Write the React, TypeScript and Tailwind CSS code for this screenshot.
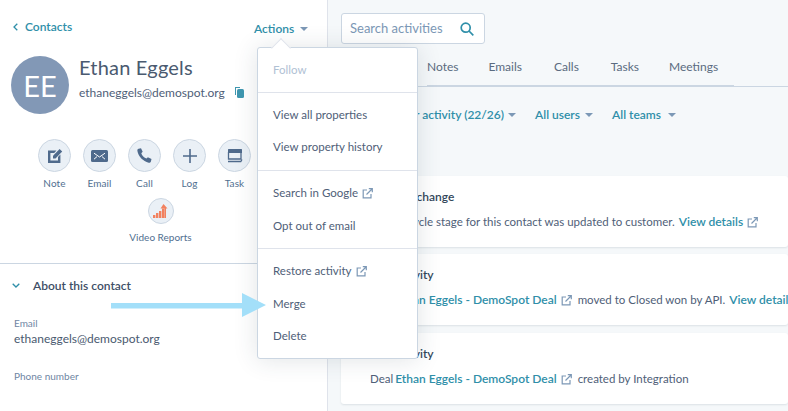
import type { ReactNode } from 'react';

const LINK = 'text-[#2f8fa9]';

/* ── icons ──────────────────────────────────────────── */
function Caret({ className = 'fill-[#7c98b6]' }: { className?: string }) {
  return (
    <svg width="8" height="4" viewBox="0 0 8 4" className={className}>
      <path d="M0 0h8L4 4z" />
    </svg>
  );
}

function External({ className = '' }: { className?: string }) {
  return (
    <svg width="11" height="11" viewBox="0 0 11 11" fill="none" stroke="#7c98b6" strokeWidth="1.2" className={`flex-none ${className}`}>
      <path d="M5 2H1.200v7.800H9V6" />
      <path d="M4.500 6.500 10 1M6.800.7h3.500v3.500" />
    </svg>
  );
}

function NoteIcon() {
  return (
    <svg width="16" height="16" viewBox="0 0 16 16" fill="#4f6a8c">
      <path d="M1 2.500h8.500L7.200 5H3.400v7.600H11V9l2.400-2.500V15H1z" />
      <path d="M6 7.800 12.600.9l2.600 2.500-6.700 7H6z" />
    </svg>
  );
}

function EmailIcon() {
  return (
    <svg width="17" height="12" viewBox="0 0 17 12">
      <rect width="17" height="12" rx="1.500" fill="#4f6a8c" />
      <path d="M3 3.200 8.500 7 14 3.200M3 9.200 6 6.600M14 9.200 11 6.600" fill="none" stroke="#fff" strokeWidth="1" />
    </svg>
  );
}

function PhoneIcon() {
  return (
    <svg width="15" height="15" viewBox="0 0 15 15" fill="#4f6a8c">
      <path d="M1.600.8 4 .2l1.700 3.500L4.300 5.200c.6 2.200 2.900 4.700 5.200 5.400l1.400-1.400 3.600 1.700-.6 2.500c-.3 1-1.200 1.500-2.200 1.300C6 13.300 1.400 8.600.4 3c-.2-1 .2-1.900 1.200-2.200z" />
    </svg>
  );
}

function PlusIcon() {
  return (
    <svg width="14" height="14" viewBox="0 0 14 14" stroke="#4f6a8c" strokeWidth="1.600">
      <path d="M7 0v14M0 7h14" />
    </svg>
  );
}

function TaskIcon() {
  return (
    <svg width="16" height="15" viewBox="0 0 16 15" fill="none">
      <path d="M1.500 1h13c.4 0 .5.200.5.500V5H1V1.500c0-.3.100-.5.500-.5z" fill="#4f6a8c" />
      <path d="M1.500 4v7h12.500V4M1 13.500h12.800l1.200-2" stroke="#4f6a8c" strokeWidth="1.300" />
    </svg>
  );
}

function ReportsIcon() {
  return (
    <svg width="15" height="14" viewBox="0 0 15 14" fill="#f2815f">
      <rect x="0" y="11" width="2.400" height="3" />
      <rect x="3" y="9" width="2.400" height="5" />
      <rect x="6" y="7" width="2.400" height="7" />
      <rect x="9" y="4.500" width="2.400" height="9.500" />
      <path d="M10.500 0 14.500 4.500H13V14h-1.500V4.500H7.500z" />
    </svg>
  );
}

/* ── bits ───────────────────────────────────────────── */
function ActionButton({ icon, label }: { icon: ReactNode; label: string }) {
  return (
    <div className="flex w-[45px] flex-col items-center">
      <div className="flex h-[33px] w-[33px] items-center justify-center rounded-full border border-[#cbd6e2] bg-[#eaf0f6]">
        {icon}
      </div>
      <span className="mt-[3px] text-[10px] leading-[16px] tracking-[0.1px] text-[#516f90]">{label}</span>
    </div>
  );
}

function MenuItem({ children, muted, external, className = '' }: { children: string; muted?: boolean; external?: boolean; className?: string }) {
  return (
    <div className={`flex h-[32px] items-center gap-[4px] pl-[15px] text-[11.5px] ${muted ? 'text-[#b0c1d4]' : 'text-[#4f6078]'} ${className}`}>
      {children}
      {external && <External />}
    </div>
  );
}

function Card({ title, children, className = '' }: { title: string; children: ReactNode; className?: string }) {
  return (
    <div className={`h-[71px] rounded-[3px] bg-white pl-[26px] shadow-[0_1px_2px_rgba(45,62,80,0.12)] ${className}`}>
      <p className="pt-[13px] text-[12px] font-semibold leading-[16px] text-[#33475b]">{title}</p>
      <p className="ml-[3px] mt-[9px] flex items-center whitespace-nowrap text-[11.5px] leading-[16px] text-[#4f6078]">{children}</p>
    </div>
  );
}

function CardLink({ children, className = 'ml-[4px]' }: { children: string; className?: string }) {
  return <span className={`text-[12px] font-semibold ${LINK} ${className}`}>{children}</span>;
}

export default function App() {
  return (
    <div className="relative flex h-[411px] w-[788px] overflow-hidden bg-[#f5f8fa] font-['Lato',sans-serif]">
      {/* Left panel */}
      <aside className="flex w-[328px] flex-none flex-col border-r border-[#dfe3eb] bg-white">
        <div className="flex h-[56px] items-start pl-[13px] pt-[18px]">
          <svg width="5" height="8" viewBox="0 0 5 8" fill="none" stroke="#2f8fa9" strokeWidth="1.300" className="mt-[5px]">
            <path d="M4.300.7 1 4l3.300 3.300" />
          </svg>
          <span className={`ml-[7px] w-[52px] text-[12px] font-semibold leading-[17px] ${LINK}`}>Contacts</span>
          <span className={`ml-[177px] mt-[2px] flex items-center gap-[6px] text-[12px] font-semibold leading-[17px] ${LINK}`}>
            Actions <Caret />
          </span>
        </div>

        <div className="flex pl-[11px]">
          <div className="flex h-[58px] w-[58px] items-center justify-center rounded-full bg-[#8298b6] text-[29px] leading-none text-white">
            EE
          </div>
          <div className="ml-[10px]">
            <h1 className="-mt-[2px] text-[20px] leading-[26px] tracking-[0.2px] text-[#4a5a70]">Ethan Eggels</h1>
            <div className="mt-[4px] flex items-center gap-[10px] text-[12px] leading-[17px] text-[#4f6078]">
              ethaneggels@demospot.org
              <svg width="9" height="11" viewBox="0 0 9 11" fill="#3f97b0">
                <path d="M0 0h5v1H1v7H0z" />
                <rect x="2" y="2" width="7" height="9" rx="1.500" />
              </svg>
            </div>
          </div>
        </div>

        <div className="mt-[25px] flex pl-[32px]">
          <ActionButton icon={<NoteIcon />} label="Note" />
          <ActionButton icon={<EmailIcon />} label="Email" />
          <ActionButton icon={<PhoneIcon />} label="Call" />
          <ActionButton icon={<PlusIcon />} label="Log" />
          <ActionButton icon={<TaskIcon />} label="Task" />
        </div>

        <div className="mt-[7px] flex w-[321px] flex-col items-center">
          <div className="flex h-[26px] w-[26px] items-center justify-center rounded-full border border-[#cbd6e2] bg-[#eaf0f6]">
            <ReportsIcon />
          </div>
          <span className="mt-[5px] text-[10px] leading-[16px] text-[#516f90]">Video Reports</span>
        </div>

        <div className="mt-[18px] flex-1 border-t border-[#cbd6e2]">
          <div className="flex items-center pl-[12px] pt-[13px]">
            <svg width="8" height="5" viewBox="0 0 8 5" fill="none" stroke="#2f8fa9" strokeWidth="1.300">
              <path d="M.7.7 4 4 7.300.7" />
            </svg>
            <span className="ml-[13px] text-[12px] font-semibold leading-[17px] text-[#3e4f66]">About this contact</span>
          </div>
          <p className="ml-[14px] mt-[21px] text-[10px] leading-[16px] text-[#6f86a3]">Email</p>
          <p className="ml-[14px] mt-[-1px] text-[12px] leading-[17px] text-[#4a5a70]">ethaneggels@demospot.org</p>
          <p className="ml-[14px] mt-[21px] text-[10px] leading-[16px] text-[#6f86a3]">Phone number</p>
        </div>
      </aside>

      {/* Right panel */}
      <main className="min-w-0 flex-1">
        <div className="ml-[13px] mt-[13px] flex h-[31px] w-[144px] items-center rounded-[3px] border border-[#cbd6e2] bg-white pl-[8px]">
          <span className="w-[92px] whitespace-nowrap text-[13px] text-[#7c98b6]">Search activities</span>
          <svg width="14" height="14" viewBox="0 0 14 14" fill="none" stroke="#2f8fa9" strokeWidth="1.700" className="ml-[18px]">
            <circle cx="5.700" cy="5.700" r="4.500" />
            <path d="m9 9 4.300 4.300" />
          </svg>
        </div>

        <div className="mt-[14px] flex h-[29px] items-start border-b border-[#cbd6e2] pl-[99px] text-[12px] leading-[17px] text-[#5a6b80]">
          <div className="flex h-[29px] gap-[30px] border-b-[2px] border-[#cbd6e2] pr-[16px]">
            <span>Notes</span>
            <span>Emails</span>
            <span className="ml-[2px]">Calls</span>
            <span className="ml-[2px]">Tasks</span>
            <span>Meetings</span>
          </div>
        </div>

        <div className={`mt-[19px] flex h-[17px] items-center pl-[13px] text-[12px] font-semibold leading-[17px] ${LINK}`}>
          <span className="ml-[20px] w-[143px] whitespace-nowrap text-right">Filter activity (22/26)</span>
          <Caret className="ml-[4px] fill-[#7c98b6]" />
          <span className="ml-[19px]">All users</span>
          <Caret className="ml-[5px] fill-[#7c98b6]" />
          <span className="ml-[19px]">All teams</span>
          <Caret className="ml-[7px] fill-[#7c98b6]" />
        </div>

        <div className="ml-[13px] mt-[53px] flex flex-col gap-[7px]">
          <Card title="Lifecycle change">
            The lifecycle stage for this contact was updated to customer.
            <CardLink>View details</CardLink>
            <External className="ml-[4px]" />
          </Card>
          <Card title="Deal activity">
            Deal <CardLink className="ml-[2px]">Ethan Eggels - DemoSpot Deal</CardLink>
            <External className="ml-[4px] mr-[6px]" />
            moved to Closed won by API.
            <CardLink>View details</CardLink>
          </Card>
          <Card title="Deal activity" className="mt-[1px]">
            Deal <CardLink className="ml-[2px]">Ethan Eggels - DemoSpot Deal</CardLink>
            <External className="ml-[4px] mr-[6px]" />
            created by Integration
          </Card>
        </div>
      </main>

      {/* Actions dropdown */}
      <div className="absolute left-[257px] top-[47px] w-[161px] rounded-[3px] border border-[#cbd6e2] bg-white shadow-[0_1px_24px_rgba(45,62,80,0.14)]">
        <div className="absolute left-[16px] top-[-7px] h-[14px] w-[14px] rotate-45 border-l border-t border-[#dfe3eb] bg-white" />
        <div className="relative border-b border-[#dfe3eb] pb-[6px] pt-[6px]">
          <MenuItem muted>Follow</MenuItem>
        </div>
        <div className="border-b border-[#dfe3eb] pb-[7px] pt-[6px]">
          <MenuItem>View all properties</MenuItem>
          <MenuItem>View property history</MenuItem>
        </div>
        <div className="border-b border-[#dfe3eb] pb-[6px] pt-[6px]">
          <MenuItem external>Search in Google</MenuItem>
          <MenuItem className="mt-[1px]">Opt out of email</MenuItem>
        </div>
        <div className="pb-[6px] pt-[6px]">
          <MenuItem external>Restore activity</MenuItem>
          <MenuItem className="mt-[1px]">Merge</MenuItem>
          <MenuItem>Delete</MenuItem>
        </div>
      </div>

      {/* Callout arrow */}
      <svg width="155" height="24" viewBox="0 0 155 24" className="absolute left-[111px] top-[293px]" fill="#a3dff9">
        <path d="M0 10h131V0l24 12-24 12V15.500H0z" />
      </svg>
    </div>
  );
}
